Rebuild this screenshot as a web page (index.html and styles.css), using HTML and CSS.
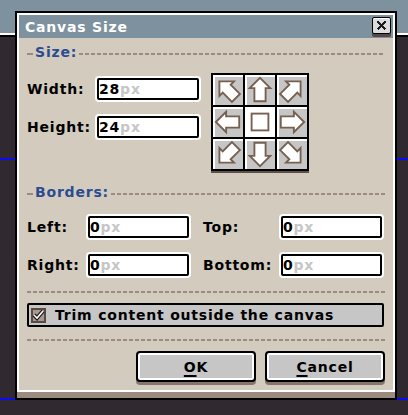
FILE: index.html
```html
<!DOCTYPE html>
<html lang="en">
<head>
    <meta charset="UTF-8">
    <title>Canvas Size</title>
    <link rel="stylesheet" href="styles.css">
</head>
<body>

<div class="desk">
    <div class="topbar"></div>
    <div class="guide guide-mid"></div>
    <div class="guide guide-low"></div>

    <div class="window">
        <div class="frame">
            <div class="title">
                <span>Canvas Size</span>
                <button class="close">
                    <svg width="11" height="11" viewBox="0 0 11 11"><path d="M1.5 1.5 L9.5 9.5 M9.5 1.5 L1.5 9.5" stroke="#1a1a1a" stroke-width="2" fill="none" shape-rendering="crispEdges"/></svg>
                </button>
            </div>

            <div class="face">
                <div class="sep"><span>Size:</span></div>

                <div class="size-row">
                    <div class="size-fields">
                        <label>Width:</label>
                        <div class="entry"><b>28</b><i>px</i></div>
                        <label>Height:</label>
                        <div class="entry"><b>24</b><i>px</i></div>
                    </div>

                    <!-- anchor buttons -->
                    <div class="anchor">
                        <div class="cell"><svg viewBox="0 0 15 15"><polygon points="7.5,1 13,6.5 10.5,6.5 10.5,13.5 4.5,13.5 4.5,6.5 2,6.5" transform="rotate(-45 7.5 7.5)"/></svg></div>
                        <div class="cell"><svg viewBox="0 0 15 15"><polygon points="7.5,1 13,6.5 10.5,6.5 10.5,13.5 4.5,13.5 4.5,6.5 2,6.5"/></svg></div>
                        <div class="cell"><svg viewBox="0 0 15 15"><polygon points="7.5,1 13,6.5 10.5,6.5 10.5,13.5 4.5,13.5 4.5,6.5 2,6.5" transform="rotate(45 7.5 7.5)"/></svg></div>
                        <div class="cell"><svg viewBox="0 0 15 15"><polygon points="7.5,1 13,6.5 10.5,6.5 10.5,13.5 4.5,13.5 4.5,6.5 2,6.5" transform="rotate(-90 7.5 7.5)"/></svg></div>
                        <div class="cell cell-on"><svg viewBox="0 0 15 15"><rect x="3" y="3" width="9" height="9"/></svg></div>
                        <div class="cell"><svg viewBox="0 0 15 15"><polygon points="7.5,1 13,6.5 10.5,6.5 10.5,13.5 4.5,13.5 4.5,6.5 2,6.5" transform="rotate(90 7.5 7.5)"/></svg></div>
                        <div class="cell"><svg viewBox="0 0 15 15"><polygon points="7.5,1 13,6.5 10.5,6.5 10.5,13.5 4.5,13.5 4.5,6.5 2,6.5" transform="rotate(-135 7.5 7.5)"/></svg></div>
                        <div class="cell"><svg viewBox="0 0 15 15"><polygon points="7.5,1 13,6.5 10.5,6.5 10.5,13.5 4.5,13.5 4.5,6.5 2,6.5" transform="rotate(180 7.5 7.5)"/></svg></div>
                        <div class="cell"><svg viewBox="0 0 15 15"><polygon points="7.5,1 13,6.5 10.5,6.5 10.5,13.5 4.5,13.5 4.5,6.5 2,6.5" transform="rotate(135 7.5 7.5)"/></svg></div>
                    </div>
                </div>

                <div class="sep sep-borders"><span>Borders:</span></div>

                <div class="borders">
                    <label>Left:</label>
                    <div class="entry"><b>0</b><i>px</i></div>
                    <label class="second">Top:</label>
                    <div class="entry"><b>0</b><i>px</i></div>
                    <label>Right:</label>
                    <div class="entry"><b>0</b><i>px</i></div>
                    <label class="second">Bottom:</label>
                    <div class="entry"><b>0</b><i>px</i></div>
                </div>

                <div class="sep sep-plain"></div>

                <div class="check">
                    <svg width="16" height="15" viewBox="0 0 16 15">
                        <rect x="1" y="1" width="13" height="13" fill="#a89a8e" stroke="#5a4a46" stroke-width="2"/>
                        <path d="M3 7 L6 10 L12 3" stroke="#1a1a1a" stroke-width="4" fill="none"/>
                        <path d="M3 7 L6 10 L12 3" stroke="#ffffff" stroke-width="1.6" fill="none"/>
                    </svg>
                    <span>Trim content outside the canvas</span>
                </div>

                <div class="sep sep-plain sep-last"></div>

                <div class="buttons">
                    <button class="btn"><u>O</u>K</button>
                    <button class="btn"><u>C</u>ancel</button>
                </div>
            </div>
        </div>
    </div>
</div>

</body>
</html>
```

FILE: styles.css
```css
body {
    margin: 0;
    background-color: #302930;
    font-family: "DejaVu Sans", sans-serif;
    font-size: 14px;
    font-weight: bold;
    letter-spacing: 0.8px;
    overflow: hidden;
}
.desk {
    position: relative;
    width: 408px;
    height: 415px;
}
.topbar {
    height: 33px;
    background-color: #7d929e;
    border-bottom: 2px solid #fff;
    box-shadow: 0 2px 0 #000;
}
.guide {
    position: absolute;
    left: 0;
    right: 0;
    height: 2px;
    background-color: #0b0bf5;
}
.guide-mid {
    top: 158px;
}
.guide-low {
    top: 398px;
}
.window {
    position: absolute;
    left: 15px;
    top: 11px;
    width: 382px;
    box-sizing: border-box;
    border: 2px solid #000;
    background-color: #9b8a7d;
    padding-bottom: 6px;
}
.frame {
    border: 2px solid #fff;
}
.title {
    height: 23px;
    background-color: #7d929e;
    color: #fff;
    display: flex;
    align-items: center;
    justify-content: space-between;
    padding-left: 6px;
}
.close {
    width: 19px;
    height: 17px;
    margin: 2px 2px 0 0;
    align-self: flex-start;
    padding: 0;
    border: 1px solid #000;
    border-radius: 2px;
    background-color: #dcdcdc;
    box-shadow: inset 0 1px 0 #fff, 0 3px 0 #554649;
    display: flex;
    align-items: center;
    justify-content: center;
}
.face {
    height: 352px;
    box-sizing: border-box;
    background-color: #d3cbbe;
    padding: 4px 8px 0 8px;
}

/* separators */
.sep {
    display: flex;
    align-items: center;
    height: 20px;
    color: #2c4c91;
}
.sep::before {
    content: "";
    width: 6px;
    height: 2px;
    margin: 4px 2px 0 0;
    background-color: #9c8b7e;
}
.sep::after {
    content: "";
    flex: 1;
    height: 2px;
    margin: 4px 0 0 2px;
    background: repeating-linear-gradient(to right, #9c8b7e 0 4px, transparent 4px 6px);
}
.sep-plain::before {
    width: 4px;
    margin-right: 2px;
}
.sep-plain::after {
    margin-left: 0;
}
.sep-borders {
    margin-top: 11px;
}
.sep-plain {
    margin-top: 4px;
}
.sep-last {
    margin-top: 1px;
}

/* size */
.size-row {
    display: flex;
    gap: 12px;
    margin-top: 11px;
}
.size-fields {
    display: grid;
    grid-template-columns: 70px 102px;
    row-gap: 16px;
    align-items: center;
    align-self: flex-start;
    margin-top: 5px;
}
.entry {
    height: 22px;
    box-sizing: border-box;
    border: 2px solid #000;
    border-radius: 2px;
    background-color: #fff;
    box-shadow: 0 0 0 2px #fff;
    display: flex;
    align-items: center;
    padding-left: 0;
}
.entry b {
    color: #000;
}
.entry i {
    font-style: normal;
    color: #c6c6c6;
}
.anchor {
    display: grid;
    grid-template-columns: repeat(3, 30px);
    grid-auto-rows: 30px;
    gap: 2px;
    border: 2px solid #000;
    background-color: #000;
    box-shadow: 0 2px 0 #5d4f4b;
}
.cell {
    background-color: #c6c6c6;
    box-shadow: inset 0 2px 0 #fff, inset 2px 0 0 #fff;
    display: flex;
    align-items: center;
    justify-content: center;
}
.cell svg {
    width: 28px;
    height: 28px;
}
.cell polygon,
.cell rect {
    fill: #fff;
    stroke: #76604f;
    stroke-width: 1;
    stroke-linejoin: miter;
}
.cell-on {
    background-color: #fff;
}

/* borders */
.borders {
    display: grid;
    grid-template-columns: 61px 101px 92px 101px;
    row-gap: 16px;
    align-items: center;
    margin-top: 14px;
}
.borders .second {
    padding-left: 14px;
}

/* checkbox */
.check {
    height: 24px;
    box-sizing: border-box;
    margin: 3px 1px 0 0;
    border: 2px solid #000;
    border-radius: 2px;
    background-color: #c6c6c6;
    display: flex;
    align-items: center;
    gap: 8px;
    padding-left: 2px;
}

/* buttons */
.buttons {
    display: flex;
    justify-content: flex-end;
    gap: 9px;
    margin-top: 3px;
}
.btn {
    width: 120px;
    height: 31px;
    border: 2px solid #000;
    border-radius: 4px;
    background-color: #c6c6c6;
    box-shadow: inset 0 0 0 2px #fff, 0 3px 0 #85756b;
    font-family: "DejaVu Sans", sans-serif;
    font-size: 14px;
    font-weight: bold;
    letter-spacing: 0.8px;
    color: #000;
    padding: 0;
}
.btn u {
    text-decoration-thickness: 2px;
    text-underline-offset: 3px;
}
```
